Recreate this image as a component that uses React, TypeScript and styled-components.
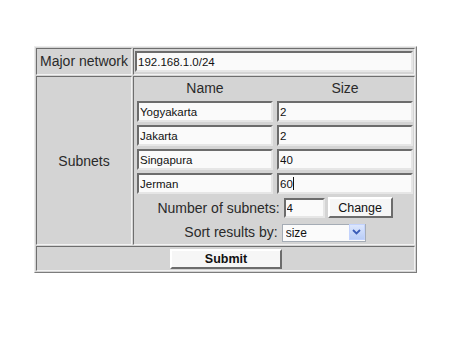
import React, { useState } from 'react';
import styled, { createGlobalStyle } from 'styled-components';

const GlobalStyle = createGlobalStyle`
  html, body {
    margin: 0;
    padding: 0;
    background: #ffffff;
    font-family: 'Liberation Sans', Arial, sans-serif;
  }
`;

type Subnet = {
  name: string;
  size: string;
};

const initialSubnets: Subnet[] = [
  { name: 'Yogyakarta', size: '2' },
  { name: 'Jakarta', size: '2' },
  { name: 'Singapura', size: '40' },
  { name: 'Jerman', size: '60' },
];

const App = () => {
  const [network, setNetwork] = useState('192.168.1.0/24');
  const [subnets, setSubnets] = useState<Subnet[]>(initialSubnets);
  const [count, setCount] = useState('4');
  const [sortBy, setSortBy] = useState('size');

  const updateSubnet = (i: number, key: keyof Subnet, value: string) => {
    setSubnets(prev => prev.map((s, idx) => (idx === i ? { ...s, [key]: value } : s)));
  };

  return (
    <Page>
      <GlobalStyle />
      <FormTable>
        <LabelCell>Major network</LabelCell>
        <FieldCell>
          <TextInput
            type='text'
            value={network}
            onChange={e => setNetwork(e.target.value)}
          />
        </FieldCell>

        <LabelCell center>Subnets</LabelCell>
        <FieldCell>
          <SubnetGrid>
            <ColumnHead>Name</ColumnHead>
            <ColumnHead>Size</ColumnHead>
            {subnets.map((s, i) => (
              <React.Fragment key={i}>
                <TextInput
                  type='text'
                  value={s.name}
                  onChange={e => updateSubnet(i, 'name', e.target.value)}
                />
                <CaretWrap>
                  <TextInput
                    type='text'
                    value={s.size}
                    onChange={e => updateSubnet(i, 'size', e.target.value)}
                  />
                  {i === subnets.length - 1 && <Caret />}
                </CaretWrap>
              </React.Fragment>
            ))}
            <ControlRow>
              <FieldLabel>Number of subnets:</FieldLabel>
              <SmallInput
                type='text'
                value={count}
                onChange={e => setCount(e.target.value)}
              />
              <Button>Change</Button>
            </ControlRow>
            <ControlRow>
              <FieldLabel>Sort results by:</FieldLabel>
              <SelectWrap>
                <Select value={sortBy} onChange={e => setSortBy(e.target.value)}>
                  <option value='size'>size</option>
                  <option value='name'>name</option>
                </Select>
                <SelectArrow>
                  <svg width='9' height='6' viewBox='0 0 9 6'>
                    <path d='M1 1 L4.5 4.5 L8 1' fill='none' stroke='#3a5cb8' strokeWidth='1.8' />
                  </svg>
                </SelectArrow>
              </SelectWrap>
            </ControlRow>
          </SubnetGrid>
        </FieldCell>

        <SubmitCell>
          <SubmitButton>Submit</SubmitButton>
        </SubmitCell>
      </FormTable>
    </Page>
  );
};

export default App;

const Page = styled.div`
  padding: 46px 0 0 34px;
`;

const FormTable = styled.div`
  width: 383px;
  box-sizing: border-box;
  display: grid;
  grid-template-columns: 96px 282px;
  grid-template-rows: 27px 169px 25px;
  gap: 1px;
  padding: 1px;
  background: #d4d4d4;
  border: 1px solid;
  border-color: #ececec #7c7c7c #7c7c7c #ececec;
`;

const Cell = styled.div`
  box-sizing: border-box;
  border: 1px solid;
  border-color: #6e6e6e #f2f2f2 #f2f2f2 #6e6e6e;
  display: flex;
  align-items: center;
`;

const LabelCell = styled(Cell)<{ center?: boolean }>`
  justify-content: center;
  font-size: 14px;
  color: #2a2a2a;
  padding-bottom: ${props => (props.center ? '0' : '1px')};
`;

const FieldCell = styled(Cell)`
  padding: 0 1px;
  align-items: stretch;
  flex-direction: column;
  justify-content: center;
`;

const SubmitCell = styled(Cell)`
  grid-column: 1 / span 2;
  justify-content: center;
  padding-left: 1px;
`;

const SubnetGrid = styled.div`
  display: grid;
  grid-template-columns: 136px 136px;
  column-gap: 4px;
  row-gap: 3px;
  padding: 1px 2px 0 2px;
  align-self: stretch;
  flex: 1;
  align-content: start;
`;

const ColumnHead = styled.div`
  height: 20px;
  font-size: 14px;
  color: #2a2a2a;
  text-align: center;
  line-height: 20px;
`;

const TextInput = styled.input`
  box-sizing: border-box;
  width: 100%;
  height: 21px;
  margin: 0;
  padding: 1px 1px 0;
  border: 2px solid;
  border-color: #6c6c6c #e6e6e6 #e6e6e6 #6c6c6c;
  background: #fafafa;
  font-family: 'Liberation Sans', Arial, sans-serif;
  font-size: 11.5px;
  color: #111;

  :focus {
    outline: none;
  }
`;

const CaretWrap = styled.div`
  position: relative;
`;

const Caret = styled.span`
  position: absolute;
  left: 16px;
  top: 4px;
  width: 1px;
  height: 13px;
  background: #111;
`;

const ControlRow = styled.div`
  grid-column: 1 / span 2;
  display: flex;
  align-items: center;
  justify-content: center;
  height: 21px;
`;

const FieldLabel = styled.span`
  font-size: 14px;
  color: #2a2a2a;
  margin-right: 4px;
`;

const SmallInput = styled(TextInput)`
  width: 41px;
  height: 20px;
  margin-right: 3px;
`;

const Button = styled.button`
  box-sizing: border-box;
  width: 65px;
  height: 21px;
  margin: 0;
  padding: 0;
  border: 2px solid;
  border-color: #ffffff #6c6c6c #6c6c6c #ffffff;
  background: #f6f6f6;
  font-family: 'Liberation Sans', Arial, sans-serif;
  font-size: 12.5px;
  color: #111;
`;

const SubmitButton = styled(Button)`
  width: 112px;
  height: 20px;
  font-weight: bold;
  font-size: 12.5px;
`;

const SelectWrap = styled.div`
  position: relative;
  width: 84px;
  height: 18px;
`;

const Select = styled.select`
  box-sizing: border-box;
  width: 100%;
  height: 100%;
  margin: 0;
  padding: 0 0 0 3px;
  appearance: none;
  border: 1px solid #a5acb5;
  border-radius: 0;
  background: #fbfbfb;
  font-family: 'Liberation Sans', Arial, sans-serif;
  font-size: 12px;
  color: #111;

  :focus {
    outline: none;
  }
`;

const SelectArrow = styled.div`
  position: absolute;
  right: 1px;
  top: 1px;
  bottom: 1px;
  width: 16px;
  display: flex;
  align-items: center;
  justify-content: center;
  background: linear-gradient(#dde7fd, #b9cdf7);
  border: 1px solid #c3d3fd;
  box-sizing: border-box;
  pointer-events: none;
`;
